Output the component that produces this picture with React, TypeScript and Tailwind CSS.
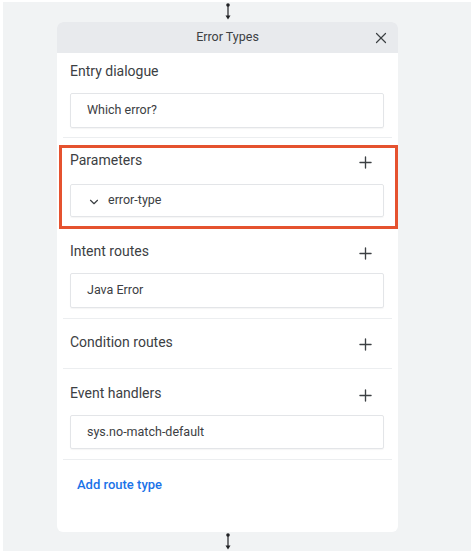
import { Plus, X, ChevronDown } from 'lucide-react';

function Connector() {
	return (
		<svg width="8" height="18" viewBox="0 0 8 18" className="block">
			<circle cx="4" cy="2" r="1.8" fill="#202124" />
			<line x1="4" y1="2" x2="4" y2="13" stroke="#202124" strokeWidth="1.2" />
			<path d="M1.5 12.5 L6.5 12.5 L4 16.5 Z" fill="#202124" />
		</svg>
	);
}

function Field({ children, h = 'h-[35px]' }: { children: React.ReactNode; h?: string }) {
	return (
		<div
			className={`${h} flex items-center pl-4 border border-[#e3e5e8] rounded-[2px] shadow-[0_1px_1px_rgba(0,0,0,0.04)] text-[12.5px] text-[#3c4043]`}>
			{children}
		</div>
	);
}

function Heading({ title }: { title: string }) {
	return (
		<div className="h-5 flex items-center justify-between">
			<span className="text-[14px] text-[#3c4043]">{title}</span>
			<Plus size={19} strokeWidth={1.7} className="text-[#3c4043] mr-[9px] mt-1" />
		</div>
	);
}

function Divider() {
	return <div className="mx-[6px] h-px bg-[#eceef0]" />;
}

function App() {
	return (
		<div className="bg-white pt-[2px] px-[3px] min-h-[551px] font-['Roboto',sans-serif]">
			<div className="bg-[#f1f3f4] h-[549px] pl-[54px]">
				<div className="w-[341px] flex flex-col items-center">
					<div className="h-5 flex items-start pt-[1px]">
						<Connector />
					</div>

					<div className="w-full h-[510px] bg-white rounded-[6px] overflow-hidden">
						<div className="h-[31px] bg-[#e8eaed] flex items-center justify-center relative">
							<span className="text-[12.5px] text-[#3c4043]">Error Types</span>
							<X size={18} strokeWidth={1.6} className="absolute right-[8px] text-[#3c4043]" />
						</div>

						<div className="pl-[13px] pr-[14px] pt-2 pb-[9px]">
							<div className="h-5 flex items-center text-[14px] text-[#3c4043]">Entry dialogue</div>
							<div className="mt-3">
								<Field>Which error?</Field>
							</div>
						</div>
						<Divider />

						<div className="mt-[7px] ml-[2px] border-[3px] border-[#e5522f] pl-2 pr-[11px] pt-[2px] pb-[9px]">
							<Heading title="Parameters" />
							<div className="mt-[14px]">
								<Field h="h-[33px]">
									<ChevronDown size={14} strokeWidth={2} className="text-[#3c4043] mt-[3px]" />
									<span className="ml-[7px]">error-type</span>
								</Field>
							</div>
						</div>

						<div className="pl-[13px] pr-[14px] pt-3 pb-[10px]">
							<Heading title="Intent routes" />
							<div className="mt-3">
								<Field>Java Error</Field>
							</div>
						</div>
						<Divider />

						<div className="pl-[13px] pr-[14px] pt-[13px] pb-4">
							<Heading title="Condition routes" />
						</div>
						<Divider />

						<div className="pl-[13px] pr-[14px] pt-[14px] pb-[10px]">
							<Heading title="Event handlers" />
							<div className="mt-3">
								<Field h="h-[34px]">sys.no-match-default</Field>
							</div>
						</div>
						<Divider />

						<div className="pl-5 pt-3">
							<span className="text-[13px] font-medium text-[#1a73e8] leading-[18px]">Add route type</span>
						</div>
					</div>

					<div className="h-[17px] flex items-start pt-[1px]">
						<Connector />
					</div>
				</div>
			</div>
		</div>
	);
}

export default App;
